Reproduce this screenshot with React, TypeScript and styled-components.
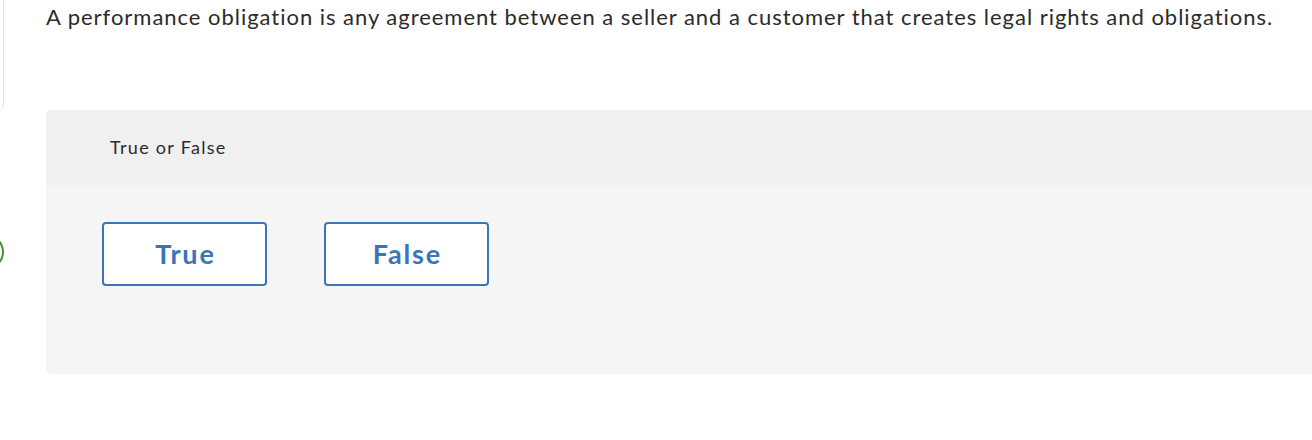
import React from "react";
import styled, { createGlobalStyle } from "styled-components";

const Global = createGlobalStyle`
  html, body { margin: 0; padding: 0; background: #ffffff; overflow: hidden; }
  body { font-family: "Lato", "Liberation Sans", sans-serif; }
`;

const Page = styled.div`
  display: flex;
  width: 1312px;
  height: 440px;
  overflow: hidden;
  background: #ffffff;
`;

const Rail = styled.div`
  width: 46px;
  flex-shrink: 0;
  overflow: hidden;
  display: flex;
  flex-direction: column;
`;

const SideCard = styled.div`
  width: 200px;
  height: 132px;
  margin-left: -196px;
  margin-top: -20px;
  box-sizing: border-box;
  border: 1px solid #e3e3e3;
  border-radius: 8px;
  flex-shrink: 0;
`;

const SidePill = styled.div`
  width: 60px;
  height: 36px;
  margin-left: -56px;
  margin-top: 122px;
  box-sizing: border-box;
  border: 2px solid #4b8a3c;
  border-radius: 18px;
  flex-shrink: 0;
`;

const Main = styled.div`
  flex: 1;
  display: flex;
  flex-direction: column;
  min-width: 0;
`;

const Question = styled.p`
  margin: 0;
  padding-top: 3px;
  font-size: 22px;
  line-height: 28px;
  letter-spacing: 0.97px;
  color: #2b2b2b;
  white-space: nowrap;
`;

const Panel = styled.section`
  margin-top: 79px;
  margin-right: -20px;
  border-radius: 5px;
  overflow: hidden;
  display: flex;
  flex-direction: column;
`;

const PanelHeader = styled.div`
  height: 75px;
  box-sizing: border-box;
  padding: 0 0 2px 64px;
  background: #f0f0f0;
  display: flex;
  align-items: center;
  font-size: 18px;
  letter-spacing: 1.3px;
  color: #2b2b2b;
`;

const PanelBody = styled.div`
  height: 189px;
  box-sizing: border-box;
  background: #f5f5f5;
  padding: 37px 0 0 56px;
  display: flex;
  align-items: flex-start;
  gap: 57px;
`;

const Choice = styled.button`
  width: 165px;
  height: 64px;
  box-sizing: border-box;
  border: 2px solid #3b74b8;
  border-radius: 4px;
  background: #ffffff;
  color: #3b74b8;
  font-family: "Lato", "Liberation Sans", sans-serif;
  font-weight: 700;
  font-size: 27px;
  letter-spacing: 1.8px;
  padding: 0 0 2px 1.8px;
  cursor: pointer;
`;

export default function App() {
  return (
    <>
      <Global />
      <Page>
        <Rail>
          <SideCard />
          <SidePill />
        </Rail>
        <Main>
          <Question>
            A performance obligation is any agreement between a seller and a customer that creates legal rights and obligations.
          </Question>
          <Panel>
            <PanelHeader>True or False</PanelHeader>
            <PanelBody>
              <Choice>True</Choice>
              <Choice>False</Choice>
            </PanelBody>
          </Panel>
        </Main>
      </Page>
    </>
  );
}
